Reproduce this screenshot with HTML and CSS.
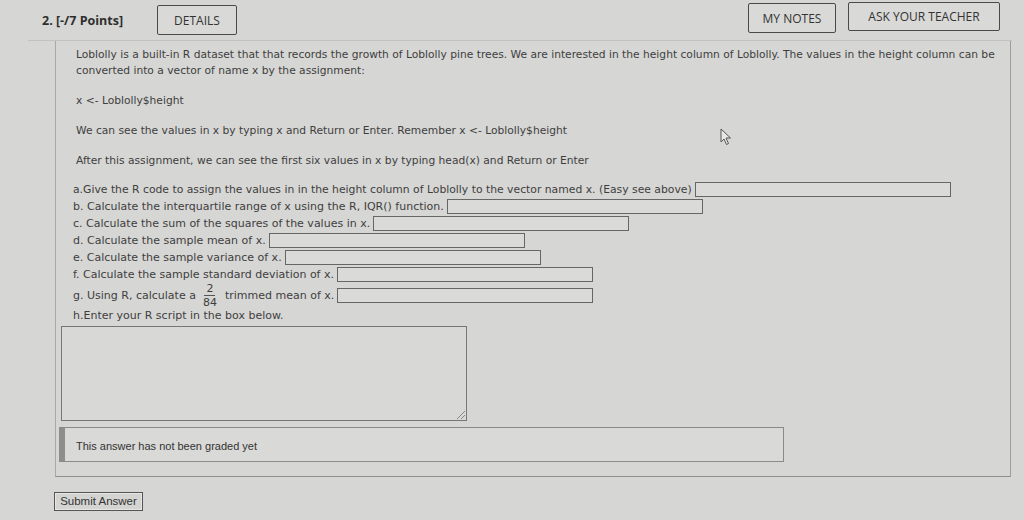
FILE: index.html
```html
<!DOCTYPE html>
<html>
<head>
<meta charset="utf-8">
<link rel="stylesheet" href="styles.css">
</head>
<body>
<div class="page">
  <div class="header">
    <div class="qnum">2. [-/7 Points]</div>
    <button class="hbtn details">DETAILS</button>
    <div class="right">
      <button class="hbtn notes">MY NOTES</button>
      <button class="hbtn ask">ASK YOUR TEACHER</button>
    </div>
  </div>
  <div class="content">
    <p class="intro">Loblolly is a built-in R dataset that that records the growth of Loblolly pine trees. We are interested in the height column of Loblolly. The values in the height column can be converted into a vector of name x by the assignment:</p>
    <p class="line">x &lt;- Loblolly$height</p>
    <p class="line">We can see the values in x by typing x and Return or Enter. Remember x &lt;- Loblolly$height</p>
    <p class="line">After this assignment, we can see the first six values in x by typing head(x) and Return or Enter</p>
    <div class="qs">
      <div class="q qa">a.Give the R code to assign the values in in the height column of Loblolly to the vector named x. (Easy see above) <span class="inp"></span></div>
      <div class="q">b. Calculate the interquartile range of x using the R, IQR() function. <span class="inp"></span></div>
      <div class="q">c. Calculate the sum of the squares of the values in x. <span class="inp"></span></div>
      <div class="q">d. Calculate the sample mean of x. <span class="inp"></span></div>
      <div class="q">e. Calculate the sample variance of x. <span class="inp"></span></div>
      <div class="q">f. Calculate the sample standard deviation of x. <span class="inp"></span></div>
      <div class="q qg">g. Using R, calculate a <span class="frac"><span class="num">2</span><span class="den">84</span></span> trimmed mean of x. <span class="inp"></span></div>
      <div class="q">h.Enter your R script in the box below.</div>
    </div>
    <div class="textarea"><span class="grip"></span></div>
    <div class="graded"><span class="bar"></span><span class="gtext">This answer has not been graded yet</span></div>
  </div>
  <div class="submit-row">
    <button class="submit">Submit Answer</button>
  </div>
  <svg class="cursor" width="12" height="18" viewBox="0 0 12 18"><path d="M1 1 L1 14 L4 11 L6.5 16.5 L8.5 15.5 L6 10 L10.5 10 Z" fill="#e8e8e8" stroke="#555" stroke-width="1"/></svg>
</div>
</body>
</html>
```

FILE: styles.css
```css
html, body {
  margin: 0;
  padding: 0;
  background: #d6d6d4;
}
.page {
  position: relative;
  width: 1024px;
  height: 520px;
  overflow: hidden;
  font-family: "DejaVu Sans", Verdana, sans-serif;
  color: #3e3e3e;
}
.header {
  display: flex;
  align-items: center;
  height: 40px;
  border-bottom: 1px solid #c2c2c0;
  margin-left: 28px;
  padding-left: 14px;
  padding-right: 12px;
  margin-right: 12px;
}
.qnum {
  font-family: "Open Sans", sans-serif;
  font-weight: 700;
  font-size: 12.5px;
  color: #2e2e2e;
  width: 115px;
}
.hbtn {
  font-family: "Open Sans", sans-serif;
  font-size: 12px;
  color: #333;
  background: #d9d9d7;
  border: 1px solid #4a4a4a;
  border-radius: 2px;
  height: 30px;
  padding: 0 8px;
  white-space: nowrap;
}
.details { width: 80px; }
.right {
  margin-left: auto;
  display: flex;
  gap: 12px;
  align-self: flex-start;
  margin-top: 3px;
}
.notes { width: 88px; }
.ask { width: 152px; height: 29px; margin-top: -1px; }
.content {
  margin-left: 55px;
  width: 956px;
  border-left: 1px solid #a9a9a7;
  border-right: 1px solid #9c9c9a;
  border-bottom: 1px solid #8e8e8c;
  padding: 6px 0 15px 20px;
  height: 436px;
  box-sizing: border-box;
  font-size: 10.7px;
}
p { margin: 0; }
.intro {
  line-height: 16px;
  width: 930px;
}
.line {
  line-height: 16px;
  margin-top: 14px;
}
.qs {
  margin-top: 12px;
  margin-left: -3px;
}
.q {
  display: flex;
  align-items: center;
  height: 17px;
  font-size: 11px;
  white-space: nowrap;
}
.qa { font-size: 10.8px; }
.inp {
  display: inline-block;
  width: 256px;
  height: 15px;
  border: 1px solid #666;
  background: #dadad8;
  margin-left: 3px;
  box-sizing: border-box;
}
.qg { height: 24px; }
.frac {
  display: inline-flex;
  flex-direction: column;
  align-items: center;
  margin: 0 8px 0 7px;
  font-size: 11px;
  line-height: 11px;
}
.num {
  border-bottom: 1px solid #555;
  padding: 0 2px 1px;
}
.den { padding-top: 1px; }
.textarea {
  position: relative;
  width: 406px;
  height: 95px;
  border: 1px solid #777;
  margin: 2px 0 0 -15px;
  background: #d8d8d6;
  box-sizing: border-box;
}
.grip {
  position: absolute;
  right: 1px;
  bottom: 1px;
  width: 8px;
  height: 8px;
  background: linear-gradient(135deg, transparent 45%, #888 46%, #888 54%, transparent 55%, transparent 70%, #888 71%, #888 79%, transparent 80%);
}
.graded {
  display: flex;
  align-items: center;
  width: 725px;
  height: 35px;
  border: 1px solid #8a8a88;
  border-left: none;
  margin: 6px 0 0 -17px;
  box-sizing: border-box;
  background: #d9d9d7;
}
.bar {
  width: 6px;
  height: 100%;
  background: #8d8d8b;
}
.gtext {
  font-family: "Liberation Sans", Arial, sans-serif;
  font-size: 11px;
  color: #333;
  margin-left: 11px;
  margin-top: 3px;
}
.submit-row {
  padding: 13px 0 0 54px;
}
.submit {
  font-family: "Liberation Sans", Arial, sans-serif;
  font-size: 11.5px;
  color: #333;
  background: #d4d4d2;
  border: 1px solid #555;
  box-shadow: inset 0 0 0 1px #e6e6e4;
  padding: 0 5px;
  height: 19px;
  width: 89px;
  white-space: nowrap;
  border-radius: 0;
}
.cursor {
  position: absolute;
  left: 720px;
  top: 128px;
}
```
